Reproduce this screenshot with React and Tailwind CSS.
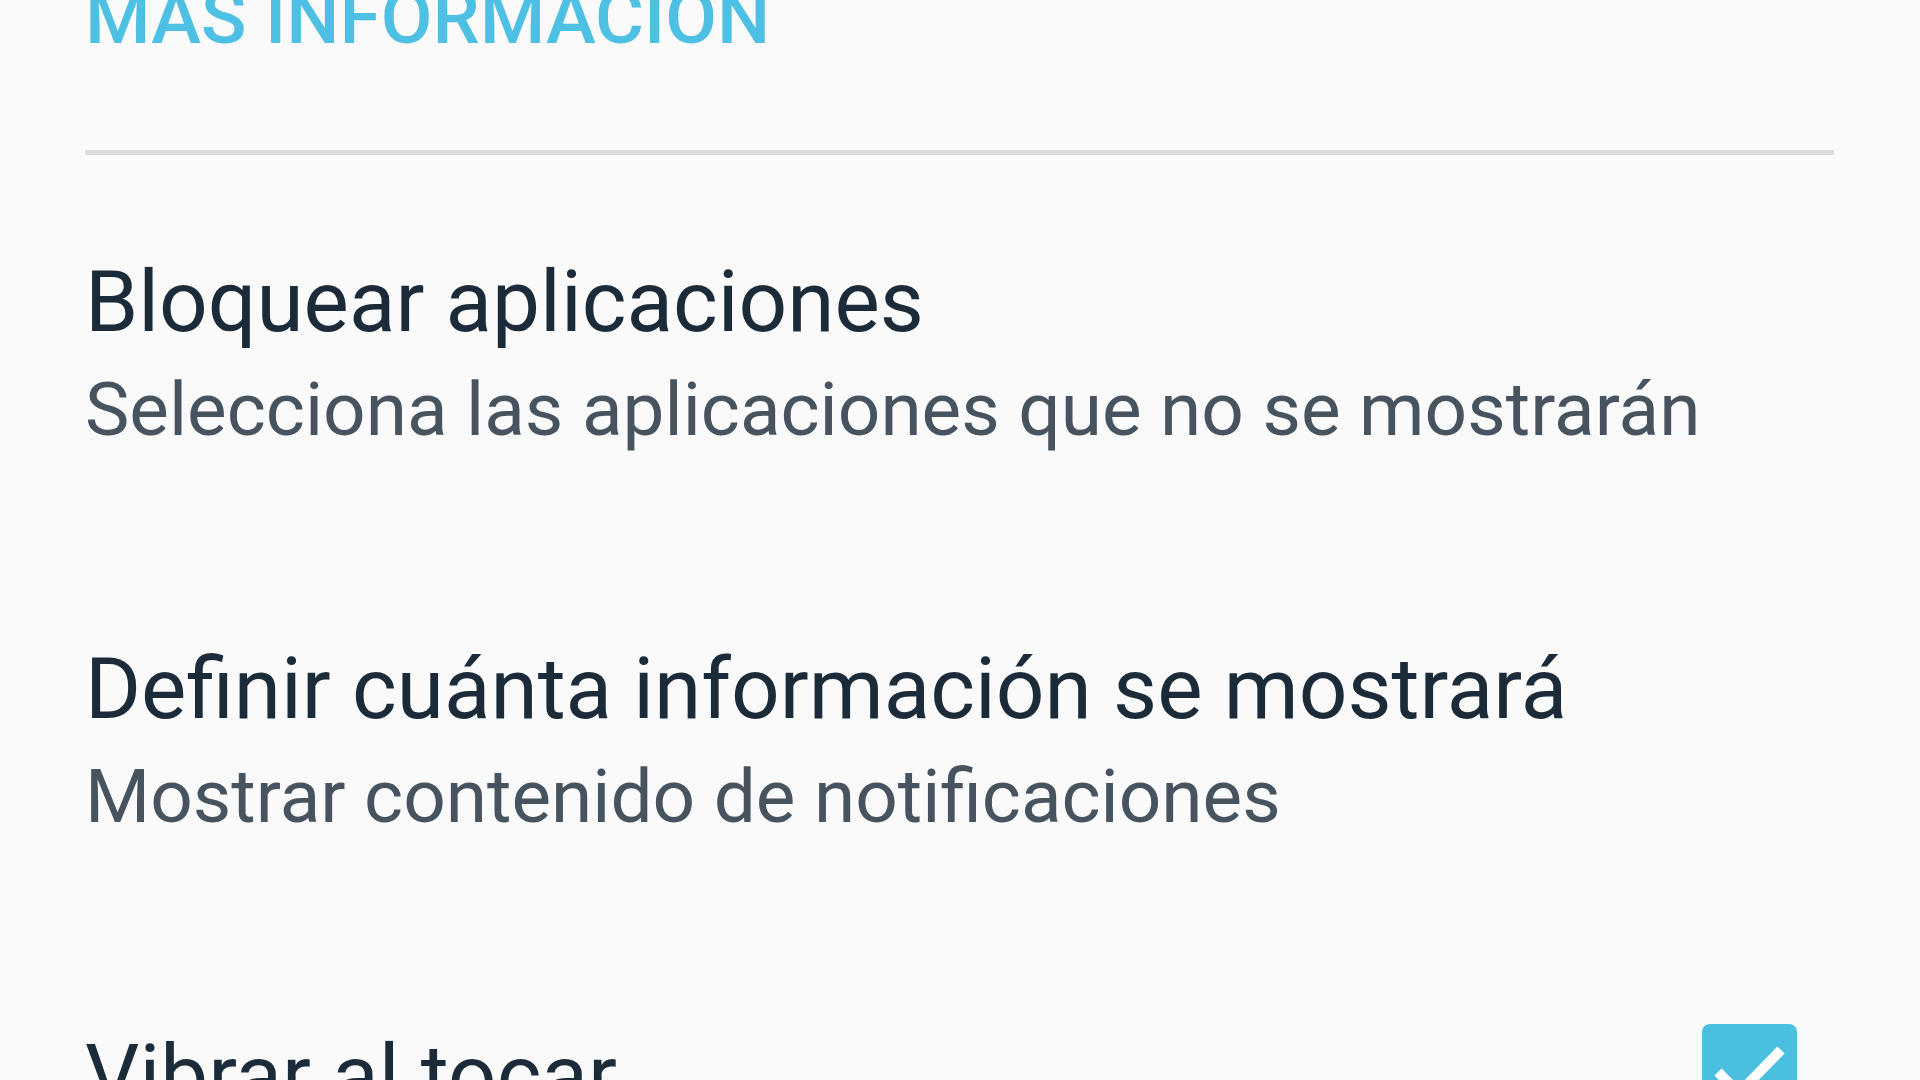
import React from "react";

const prefs = [
  {
    title: "Bloquear aplicaciones",
    summary: "Selecciona las aplicaciones que no se mostrarán",
  },
  {
    title: "Definir cuánta información se mostrará",
    summary: "Mostrar contenido de notificaciones",
  },
];

const CheckBox = () => (
  <div className="w-[95px] h-[95px] rounded-[8px] bg-[#4bbfe0] shrink-0">
    <svg viewBox="0 0 95 95" className="w-full h-full">
      <polyline
        points="16,48 37,69 79,26"
        fill="none"
        stroke="#ffffff"
        strokeWidth="10"
      />
    </svg>
  </div>
);

export default function App() {
  return (
    <div className="h-[1080px] w-full overflow-hidden bg-[#fafafa] font-['Roboto',sans-serif]">
      <div className="pl-[85px] pr-[86px]">
        {/* section header */}
        <div className="mt-[-33px] text-[75px] leading-[100px] font-medium text-[#4ec0e3] whitespace-nowrap">
          MÁS INFORMACIÓN
        </div>
        <div className="mt-[83px] h-[5px] bg-[#dcdcdc]" />

        {/* list of preferences */}
        <div className="pt-[97px] flex flex-col gap-[179px]">
          {prefs.map((p) => (
            <div key={p.title}>
              <div className="text-[85.5px] leading-[100px] text-[#1c2b39] whitespace-nowrap">
                {p.title}
              </div>
              <div className="mt-[8px] text-[74.7px] leading-[100px] text-[#47535f] whitespace-nowrap">
                {p.summary}
              </div>
            </div>
          ))}
          <div className="flex items-start justify-between">
            <div className="text-[85.5px] leading-[100px] text-[#1c2b39] whitespace-nowrap">
              Vibrar al tocar
            </div>
            <div className="mt-[-2px] mr-[37px]">
              <CheckBox />
            </div>
          </div>
        </div>
      </div>
    </div>
  );
}
